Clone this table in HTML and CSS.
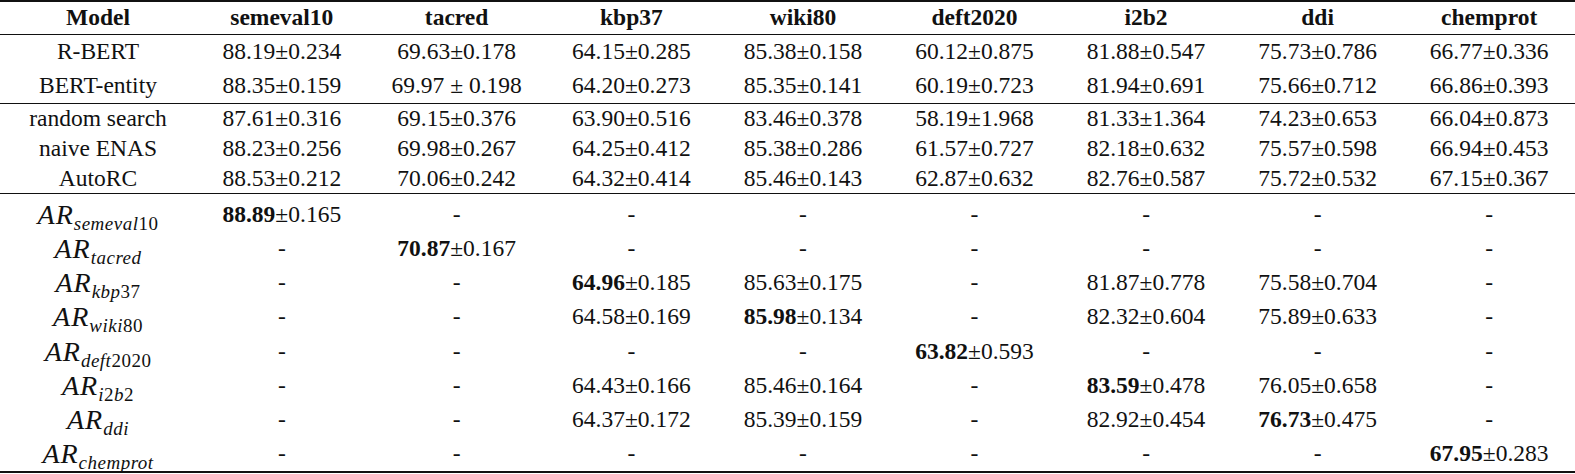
FILE: index.html
```html
<!DOCTYPE html>
<html lang="en">
<head>
  <meta charset="UTF-8">
  <title>Results</title>
  <link rel="stylesheet" href="styles.css">
</head>
<body>
  <table class="results">
    <colgroup>
      <col class="col-model">
      <col class="col-data">
      <col class="col-wide">
      <col class="col-data">
      <col class="col-data">
      <col class="col-data">
      <col class="col-data">
      <col class="col-data">
      <col class="col-data">
    </colgroup>
    <thead>
      <tr>
        <th>Model</th>
        <th>semeval10</th>
        <th>tacred</th>
        <th>kbp37</th>
        <th>wiki80</th>
        <th>deft2020</th>
        <th>i2b2</th>
        <th>ddi</th>
        <th>chemprot</th>
      </tr>
    </thead>
    <tbody class="group-base">
      <tr>
        <td>R-BERT</td>
        <td>88.19&plusmn;0.234</td>
        <td>69.63&plusmn;0.178</td>
        <td>64.15&plusmn;0.285</td>
        <td>85.38&plusmn;0.158</td>
        <td>60.12&plusmn;0.875</td>
        <td>81.88&plusmn;0.547</td>
        <td>75.73&plusmn;0.786</td>
        <td>66.77&plusmn;0.336</td>
      </tr>
      <tr>
        <td>BERT-entity</td>
        <td>88.35&plusmn;0.159</td>
        <td>69.97 &plusmn; 0.198</td>
        <td>64.20&plusmn;0.273</td>
        <td>85.35&plusmn;0.141</td>
        <td>60.19&plusmn;0.723</td>
        <td>81.94&plusmn;0.691</td>
        <td>75.66&plusmn;0.712</td>
        <td>66.86&plusmn;0.393</td>
      </tr>
    </tbody>
    <tbody class="group-search">
      <tr>
        <td>random search</td>
        <td>87.61&plusmn;0.316</td>
        <td>69.15&plusmn;0.376</td>
        <td>63.90&plusmn;0.516</td>
        <td>83.46&plusmn;0.378</td>
        <td>58.19&plusmn;1.968</td>
        <td>81.33&plusmn;1.364</td>
        <td>74.23&plusmn;0.653</td>
        <td>66.04&plusmn;0.873</td>
      </tr>
      <tr>
        <td>naive ENAS</td>
        <td>88.23&plusmn;0.256</td>
        <td>69.98&plusmn;0.267</td>
        <td>64.25&plusmn;0.412</td>
        <td>85.38&plusmn;0.286</td>
        <td>61.57&plusmn;0.727</td>
        <td>82.18&plusmn;0.632</td>
        <td>75.57&plusmn;0.598</td>
        <td>66.94&plusmn;0.453</td>
      </tr>
      <tr>
        <td>AutoRC</td>
        <td>88.53&plusmn;0.212</td>
        <td>70.06&plusmn;0.242</td>
        <td>64.32&plusmn;0.414</td>
        <td>85.46&plusmn;0.143</td>
        <td>62.87&plusmn;0.632</td>
        <td>82.76&plusmn;0.587</td>
        <td>75.72&plusmn;0.532</td>
        <td>67.15&plusmn;0.367</td>
      </tr>
    </tbody>
    <tbody class="group-ar">
      <tr class="first">
        <td><span class="math">AR<sub>semeval<span class="up">10</span></sub></span></td>
        <td><b>88.89</b>&plusmn;0.165</td>
        <td>-</td>
        <td>-</td>
        <td>-</td>
        <td>-</td>
        <td>-</td>
        <td>-</td>
        <td>-</td>
      </tr>
      <tr>
        <td><span class="math">AR<sub>tacred</sub></span></td>
        <td>-</td>
        <td><b>70.87</b>&plusmn;0.167</td>
        <td>-</td>
        <td>-</td>
        <td>-</td>
        <td>-</td>
        <td>-</td>
        <td>-</td>
      </tr>
      <tr>
        <td><span class="math">AR<sub>kbp<span class="up">37</span></sub></span></td>
        <td>-</td>
        <td>-</td>
        <td><b>64.96</b>&plusmn;0.185</td>
        <td>85.63&plusmn;0.175</td>
        <td>-</td>
        <td>81.87&plusmn;0.778</td>
        <td>75.58&plusmn;0.704</td>
        <td>-</td>
      </tr>
      <tr>
        <td><span class="math">AR<sub>wiki<span class="up">80</span></sub></span></td>
        <td>-</td>
        <td>-</td>
        <td>64.58&plusmn;0.169</td>
        <td><b>85.98</b>&plusmn;0.134</td>
        <td>-</td>
        <td>82.32&plusmn;0.604</td>
        <td>75.89&plusmn;0.633</td>
        <td>-</td>
      </tr>
      <tr>
        <td><span class="math">AR<sub>deft<span class="up">2020</span></sub></span></td>
        <td>-</td>
        <td>-</td>
        <td>-</td>
        <td>-</td>
        <td><b>63.82</b>&plusmn;0.593</td>
        <td>-</td>
        <td>-</td>
        <td>-</td>
      </tr>
      <tr>
        <td><span class="math">AR<sub>i<span class="up">2</span>b<span class="up">2</span></sub></span></td>
        <td>-</td>
        <td>-</td>
        <td>64.43&plusmn;0.166</td>
        <td>85.46&plusmn;0.164</td>
        <td>-</td>
        <td><b>83.59</b>&plusmn;0.478</td>
        <td>76.05&plusmn;0.658</td>
        <td>-</td>
      </tr>
      <tr>
        <td><span class="math">AR<sub>ddi</sub></span></td>
        <td>-</td>
        <td>-</td>
        <td>64.37&plusmn;0.172</td>
        <td>85.39&plusmn;0.159</td>
        <td>-</td>
        <td>82.92&plusmn;0.454</td>
        <td><b>76.73</b>&plusmn;0.475</td>
        <td>-</td>
      </tr>
      <tr>
        <td><span class="math">AR<sub>chemprot</sub></span></td>
        <td>-</td>
        <td>-</td>
        <td>-</td>
        <td>-</td>
        <td>-</td>
        <td>-</td>
        <td>-</td>
        <td><b>67.95</b>&plusmn;0.283</td>
      </tr>
    </tbody>
  </table>
</body>
</html>
```

FILE: styles.css
```css
* {
  margin: 0;
  padding: 0;
  box-sizing: border-box;
}

body {
  background-color: #fff;
  color: #111;
  font-family: "Liberation Serif", Tinos, "Times New Roman", Times, "DejaVu Serif", serif;
}

.results {
  width: 1575px;
  table-layout: fixed;
  border-collapse: collapse;
  font-family: "Liberation Serif", Tinos, "Times New Roman", Times, "DejaVu Serif", serif;
  font-size: 23.5px;
  line-height: 1;
}

.col-model {
  width: 196px;
}

.col-data {
  width: 171.5px;
}

.col-wide {
  width: 178px;
}

.results th,
.results td {
  font-family: inherit;
  text-align: center;
  white-space: nowrap;
  vertical-align: middle;
}

.results th {
  font-weight: bold;
  height: 33.5px;
}

.results thead tr {
  border-top: 2px solid #111;
  border-bottom: 1.5px solid #111;
}

.group-base td {
  height: 34.5px;
}

.group-search {
  border-top: 1.5px solid #111;
}

.group-search td {
  height: 30px;
}

.group-ar {
  border-top: 1.5px solid #111;
  border-bottom: 2px solid #111;
}

.group-ar td {
  height: 34.3px;
}

.group-ar .first td {
  height: 38px;
  padding-top: 4px;
}

.results b {
  font-weight: bold;
}

.math {
  font-style: italic;
  font-size: 28px;
  letter-spacing: 1px;
}

.math sub {
  font-size: 19px;
  letter-spacing: 0.5px;
  vertical-align: -6px;
  line-height: 0;
}

.math .up {
  font-style: normal;
}
```
